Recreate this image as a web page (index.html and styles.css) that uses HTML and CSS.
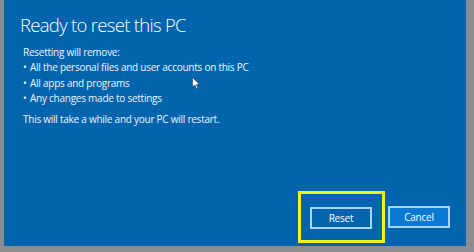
FILE: index.html
```html
<!DOCTYPE html>
<html lang="en">
  <head>
    <meta charset="UTF-8" />
    <meta name="viewport" content="width=device-width, initial-scale=1.0" />
    <title>Ready to reset this PC</title>
    <link rel="stylesheet" href="styles.css">
  </head>
  <body>
    <div class="dialog">
      <div class="title">Ready to reset this PC</div>
      <div class="text">
        <div class="line">Resetting will remove:</div>
        <div class="line bullet">All the personal files and user accounts on this PC</div>
        <div class="line bullet">All apps and programs</div>
        <div class="line bullet">Any changes made to settings</div>
        <div class="line note">This will take a while and your PC will restart.</div>
      </div>
      <div class="actions">
        <div class="highlight">
          <button class="btn">Reset</button>
        </div>
        <button class="btn primary">Cancel</button>
      </div>
      <svg class="cursor" width="9" height="13" viewBox="0 0 9 13">
        <path d="M0.5 0.5 L0.5 10 L2.8 8 L4.6 12 L6 11.3 L4.3 7.5 L7.5 7.5 Z" fill="#ffffff" stroke="#1a3d66" stroke-width="0.6" />
      </svg>
    </div>
  </body>
</html>
```

FILE: styles.css
```css
body {
  margin: 0;
  padding: 0;
  width: 474px;
  height: 252px;
  background: #8d8d8f;
  overflow: hidden;
}
.dialog {
  position: relative;
  margin-left: 4px;
  width: 462px;
  height: 246px;
  box-sizing: border-box;
  padding: 11px 0 0 16px;
  background: #0364ae;
  display: flex;
  flex-direction: column;
  color: #ffffff;
  font-family: "Open Sans", "Noto Sans", sans-serif;
}
.title {
  font-size: 18.5px;
  font-weight: 300;
  line-height: 28px;
  letter-spacing: -0.7px;
}
.text {
  margin-top: 6px;
  padding-left: 3px;
  font-size: 10px;
  line-height: 15.3px;
  letter-spacing: -0.25px;
  color: #eef4fb;
}
.bullet {
  padding-left: 7px;
  position: relative;
}
.bullet::before {
  content: "\2022";
  position: absolute;
  left: 0;
}
.note {
  margin-top: 6px;
}
.actions {
  margin-top: auto;
  padding: 0 16px 3px 0;
  display: flex;
  justify-content: flex-end;
  align-items: center;
  gap: 3px;
}
.highlight {
  border: 3px solid #f4f21c;
  padding: 11px 10px 11px 9px;
}
.btn {
  width: 62px;
  height: 22px;
  box-sizing: border-box;
  border: 2px solid #a9d6f2;
  background: #0364ae;
  color: #ffffff;
  font-family: "Open Sans", "Noto Sans", sans-serif;
  font-size: 10px;
  letter-spacing: -0.2px;
  padding: 0;
  cursor: pointer;
}
.btn.primary {
  background: #0b78d2;
}
.cursor {
  position: absolute;
  left: 188px;
  top: 77px;
}
```
